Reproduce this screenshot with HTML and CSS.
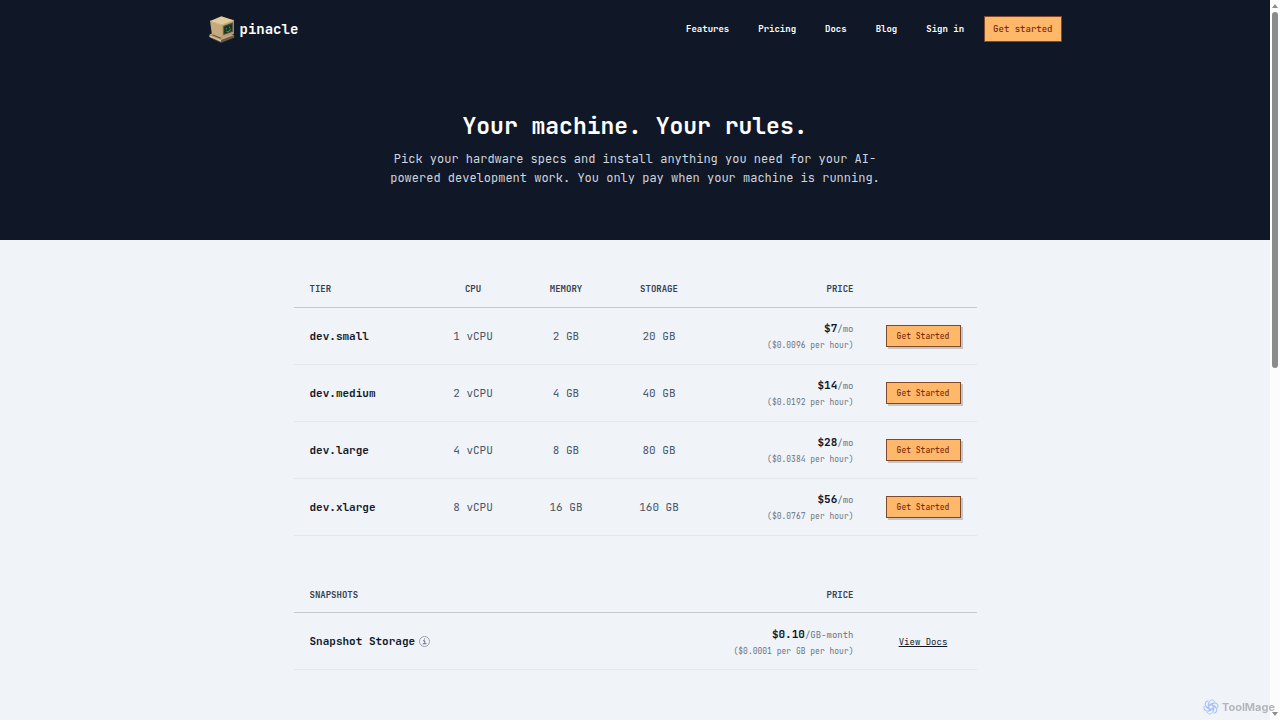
FILE: index.html
```html
<!DOCTYPE html>
<html lang="en">
<head>
    <meta charset="UTF-8">
    <meta name="viewport" content="width=device-width, initial-scale=1.0">
    <title>Pricing - pinacle</title>
    <link rel="stylesheet" href="styles.css">
</head>
<body>
    <header class="hero">
        <nav class="navbar">
            <a class="brand" href="#">
                <svg class="logo" viewBox="0 0 78 82" aria-hidden="true">
                    <path d="M1 58 L14 50 L76 58 L76 66 L36 81 L1 65z" fill="#6b5a48"/>
                    <path d="M1 57 L14 50 L76 58 L36 73z" fill="#c9ae82"/>
                    <path d="M1 58 L36 73 L36 78 L1 63z" fill="#dcc59a"/>
                    <path d="M7 58 L13 55 L40 67 L34 69z" fill="#655748"/>
                    <path d="M3 15 L37 1 L75 13 L39 26z" fill="#e3cb9b"/>
                    <path d="M3 15 L39 26 L39 67 L8 55z" fill="#c7aa7c"/>
                    <path d="M39 26 L75 13 L75 55 L39 67z" fill="#b99d70"/>
                    <path d="M43 30 L72 20 L72 48 L43 58z" fill="#4b4a35"/>
                    <path d="M46 33 L69 25 L69 45 L46 54z" fill="#153527"/>
                    <path d="M52 36v5M62 32v5M52 46l5 2 7-5v-4" fill="none" stroke="#3a9557" stroke-width="3"/>
                    <path d="M3 15 L39 26 L75 13" fill="none" stroke="#f0dcb0" stroke-width="2"/>
                </svg>
                pinacle
            </a>
            <div class="nav-links">
                <a href="#">Features</a>
                <a href="#">Pricing</a>
                <a href="#">Docs</a>
                <a href="#">Blog</a>
                <a href="#">Sign in</a>
                <button class="nav-button">Get started</button>
            </div>
        </nav>
        <div class="intro">
            <h1>Your machine. Your rules.</h1>
            <p>Pick your hardware specs and install anything you need for your AI-powered development work. You only pay when your machine is running.</p>
        </div>
    </header>

    <main class="pricing">
        <table>
            <thead>
                <tr>
                    <th class="name">Tier</th>
                    <th class="spec">CPU</th>
                    <th class="spec">Memory</th>
                    <th class="spec">Storage</th>
                    <th class="price">Price</th>
                    <th class="action"></th>
                </tr>
            </thead>
            <tbody>
                <tr>
                    <td class="name">dev.small</td>
                    <td class="spec">1 vCPU</td>
                    <td class="spec">2 GB</td>
                    <td class="spec">20 GB</td>
                    <td class="price"><div><strong>$7</strong>/mo</div><small>($0.0096 per hour)</small></td>
                    <td class="action"><button class="buy">Get Started</button></td>
                </tr>
                <tr>
                    <td class="name">dev.medium</td>
                    <td class="spec">2 vCPU</td>
                    <td class="spec">4 GB</td>
                    <td class="spec">40 GB</td>
                    <td class="price"><div><strong>$14</strong>/mo</div><small>($0.0192 per hour)</small></td>
                    <td class="action"><button class="buy">Get Started</button></td>
                </tr>
                <tr>
                    <td class="name">dev.large</td>
                    <td class="spec">4 vCPU</td>
                    <td class="spec">8 GB</td>
                    <td class="spec">80 GB</td>
                    <td class="price"><div><strong>$28</strong>/mo</div><small>($0.0384 per hour)</small></td>
                    <td class="action"><button class="buy">Get Started</button></td>
                </tr>
                <tr>
                    <td class="name">dev.xlarge</td>
                    <td class="spec">8 vCPU</td>
                    <td class="spec">16 GB</td>
                    <td class="spec">160 GB</td>
                    <td class="price"><div><strong>$56</strong>/mo</div><small>($0.0767 per hour)</small></td>
                    <td class="action"><button class="buy">Get Started</button></td>
                </tr>
            </tbody>
        </table>

        <table>
            <thead>
                <tr>
                    <th class="name">Snapshots</th>
                    <th class="price">Price</th>
                    <th class="action"></th>
                </tr>
            </thead>
            <tbody>
                <tr>
                    <td class="name">
                        <div class="with-info">
                            Snapshot Storage
                            <button class="info" aria-label="About snapshot storage">
                                <svg viewBox="0 0 22 22" fill="none" stroke="#6a7282">
                                    <circle cx="11" cy="11" r="10" stroke="#99a1af" stroke-width="2"/>
                                    <path d="M8 9.500h3.500v6M7.500 15.500h7.500M11 5v2" stroke-width="2"/>
                                </svg>
                            </button>
                        </div>
                    </td>
                    <td class="price"><div><strong>$0.10</strong>/GB-month</div><small>($0.0001 per GB per hour)</small></td>
                    <td class="action"><a class="docs" href="#">View Docs</a></td>
                </tr>
            </tbody>
        </table>
    </main>

    <!-- scroll bar -->
    <div class="scrollbar" aria-hidden="true">
        <span class="arrow-up"></span>
        <span class="thumb"></span>
        <span class="arrow-down"></span>
    </div>

    <div class="watermark">
        <svg viewBox="0 0 32 32" fill="none" stroke="#a9c1f3" stroke-width="2" aria-hidden="true">
            <path id="petal" d="M12 20 V9 C12 1 22 0 24 6 M12 12 L21 7"/>
            <use href="#petal" transform="rotate(60 16 16)"/>
            <use href="#petal" transform="rotate(120 16 16)"/>
            <use href="#petal" transform="rotate(180 16 16)"/>
            <use href="#petal" transform="rotate(240 16 16)"/>
            <use href="#petal" transform="rotate(300 16 16)"/>
        </svg>
        ToolMage
    </div>
</body>
</html>
```
FILE: styles.css
```css
* {
    box-sizing: border-box;
}
body {
    margin: 0;
    padding-right: 10px;
    min-height: 100vh;
    background-color: #f0f4f9;
    color: #101828;
    font-family: "JetBrains Mono", "DejaVu Sans Mono", monospace;
    font-size: 11px;
    line-height: 16px;
}
a {
    color: inherit;
    text-decoration: none;
}
button {
    font-family: inherit;
    cursor: pointer;
}

/* Header */
.hero {
    background-color: #101828;
    color: white;
    padding-bottom: 52px;
}
.navbar {
    display: flex;
    justify-content: space-between;
    align-items: center;
    max-width: 853px;
    height: 58px;
    margin: 0 auto;
}
.brand {
    display: flex;
    align-items: center;
    gap: 5px;
    font-size: 14px;
    font-weight: bold;
}
.logo {
    width: 26px;
    height: 27px;
}
.nav-links {
    display: flex;
    align-items: center;
    gap: 29px;
    font-size: 9px;
    font-weight: bold;
}
.nav-button {
    height: 26px;
    margin-left: -9px;
    padding: 0 8px;
    border: 1px solid #7e4a2b;
    background-color: #ffb86a;
    color: #7e2a0c;
    font-size: 9px;
    font-weight: 500;
}
.intro {
    max-width: 512px;
    margin: 0 auto;
    padding-top: 52px;
    text-align: center;
}
h1 {
    margin: 0 0 8px;
    font-size: 23px;
    line-height: 32px;
}
.intro p {
    margin: 0;
    color: #d1d5dc;
    font-size: 12px;
    line-height: 19px;
}

/* Pricing tables */
.pricing {
    max-width: 683px;
    margin: 0 auto;
    padding: 32px 0;
}
table {
    width: 100%;
    margin-bottom: 42px;
    table-layout: fixed;
    border-collapse: collapse;
}
th {
    height: 35px;
    padding: 0 16px;
    border-bottom: 1px solid #c6cbd4;
    color: #364153;
    font-size: 9px;
    text-align: left;
    text-transform: uppercase;
}
td {
    height: 57px;
    padding: 0 16px;
    border-bottom: 1px solid #e5e7eb;
}
td.name {
    font-weight: bold;
}
.spec {
    width: 93px;
    text-align: center;
}
td.spec {
    color: #4a5565;
}
.price {
    width: 164px;
    text-align: right;
    white-space: nowrap;
}
td.price {
    padding-top: 2px;
    color: #6a7282;
    font-size: 9px;
}
.price strong {
    color: #101828;
    font-size: 11px;
}
.price small {
    display: block;
    font-size: 8px;
}
.action {
    width: 107px;
    text-align: center;
}
.buy {
    display: block;
    width: 75px;
    height: 22px;
    padding: 0;
    border: 1px solid #7e4a2b;
    background-color: #ffb86a;
    box-shadow: 2px 2px 0 #c6c6c8;
    color: #7e2a0c;
    font-size: 8px;
    font-weight: 500;
}
.with-info {
    display: flex;
    align-items: center;
    gap: 4px;
    white-space: nowrap;
}
.info {
    display: flex;
    padding: 0;
    border: none;
    background: none;
}
.info svg {
    width: 11px;
    height: 11px;
}
.docs {
    font-size: 9px;
    text-decoration: underline;
}

/* Over the page */
.scrollbar {
    position: fixed;
    top: 0;
    right: 0;
    bottom: 0;
    width: 10px;
    display: flex;
    flex-direction: column;
    align-items: center;
    gap: 4px;
    padding: 4px 2px;
    background-color: #fcfcfc;
}
.arrow-up,
.arrow-down {
    border: 3px solid transparent;
}
.arrow-up {
    border-top: none;
    border-bottom: 4px solid #8b8b8b;
}
.arrow-down {
    margin-top: auto;
    border-bottom: none;
    border-top: 4px solid #8b8b8b;
}
.thumb {
    width: 6px;
    height: 50%;
    border-radius: 3px;
    background-color: #8b8b8b;
}
.watermark {
    position: fixed;
    right: 5px;
    bottom: 4px;
    display: flex;
    align-items: center;
    gap: 3px;
    color: #b4b6ba;
    font-family: Inter, sans-serif;
    font-size: 11px;
    font-weight: bold;
    line-height: 18px;
}
.watermark svg {
    width: 16px;
    height: 16px;
}
```
